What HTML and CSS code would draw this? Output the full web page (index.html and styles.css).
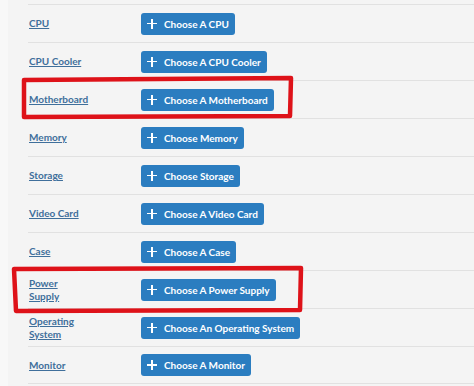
FILE: index.html
```html
<!DOCTYPE html>
<html lang="en">
<head>
  <meta charset="UTF-8">
  <meta name="viewport" content="width=device-width, initial-scale=1.0">
  <title>Parts List</title>
  <link rel="stylesheet" href="styles.css">
</head>
<body>
<div class="page">
  <div class="parts">
    <div class="part-row">
      <a class="part-name" href="#">CPU</a>
      <button class="choose-btn"><span class="plus"></span>Choose A CPU</button>
    </div>
    <div class="part-row">
      <a class="part-name" href="#">CPU Cooler</a>
      <button class="choose-btn"><span class="plus"></span>Choose A CPU Cooler</button>
    </div>
    <div class="part-row">
      <a class="part-name" href="#">Motherboard</a>
      <button class="choose-btn"><span class="plus"></span>Choose A Motherboard</button>
    </div>
    <div class="part-row">
      <a class="part-name" href="#">Memory</a>
      <button class="choose-btn"><span class="plus"></span>Choose Memory</button>
    </div>
    <div class="part-row">
      <a class="part-name" href="#">Storage</a>
      <button class="choose-btn"><span class="plus"></span>Choose Storage</button>
    </div>
    <div class="part-row">
      <a class="part-name" href="#">Video Card</a>
      <button class="choose-btn"><span class="plus"></span>Choose A Video Card</button>
    </div>
    <div class="part-row">
      <a class="part-name" href="#">Case</a>
      <button class="choose-btn"><span class="plus"></span>Choose A Case</button>
    </div>
    <div class="part-row">
      <a class="part-name" href="#">Power Supply</a>
      <button class="choose-btn"><span class="plus"></span>Choose A Power Supply</button>
    </div>
    <div class="part-row">
      <a class="part-name" href="#">Operating System</a>
      <button class="choose-btn"><span class="plus"></span>Choose An Operating System</button>
    </div>
    <div class="part-row">
      <a class="part-name" href="#">Monitor</a>
      <button class="choose-btn"><span class="plus"></span>Choose A Monitor</button>
    </div>
  </div>

  <!-- hand-drawn highlight marks -->
  <svg class="marks" width="474" height="386" viewBox="0 0 474 386">
    <path d="M24 80 L291 78 L290 116 L24 117 Z" />
    <path d="M14 269 L301 268 L300 310 L16 311 Z" />
  </svg>
</div>
</body>
</html>
```

FILE: styles.css
```css
* {
  margin: 0;
  padding: 0;
  box-sizing: border-box;
}

body {
  background: #f4f4f4;
  font-family: 'Lato', 'Open Sans', sans-serif;
  width: 474px;
  height: 386px;
  overflow: hidden;
}

.page {
  position: relative;
  height: 386px;
  background: linear-gradient(to right, #f8f8f8 0, #f8f8f8 8px, #f4f4f4 8px);
}

.parts {
  padding: 4px 0 0 28px;
}

.part-row {
  display: grid;
  grid-template-columns: 113px auto;
  align-items: center;
  height: 38px;
  border-top: 1px solid #e1e1e1;
}

.part-row:last-child {
  border-bottom: 1px solid #e1e1e1;
}

.part-name {
  color: #3f6f9b;
  font-size: 10px;
  font-weight: 700;
  line-height: 13px;
  max-width: 60px;
  padding-left: 1px;
}

.choose-btn {
  justify-self: start;
  display: flex;
  align-items: center;
  height: 22px;
  padding: 0 6px;
  background: #2b7dc0;
  color: #fff;
  border: none;
  border-radius: 3px;
  font-family: 'Lato', 'Open Sans', sans-serif;
  font-size: 10px;
  font-weight: 700;
  cursor: pointer;
}

.plus {
  position: relative;
  width: 10px;
  height: 10px;
  margin-right: 7px;
}

.plus::before,
.plus::after {
  content: '';
  position: absolute;
  background: #fff;
}

.plus::before {
  left: 0;
  top: 4.4px;
  width: 10px;
  height: 1.2px;
}

.plus::after {
  left: 4.4px;
  top: 0;
  width: 1.2px;
  height: 10px;
}

.marks {
  position: absolute;
  left: 0;
  top: 0;
  pointer-events: none;
}

.marks path {
  fill: none;
  stroke: #de1219;
  stroke-width: 4.5;
  stroke-linejoin: round;
}
```
